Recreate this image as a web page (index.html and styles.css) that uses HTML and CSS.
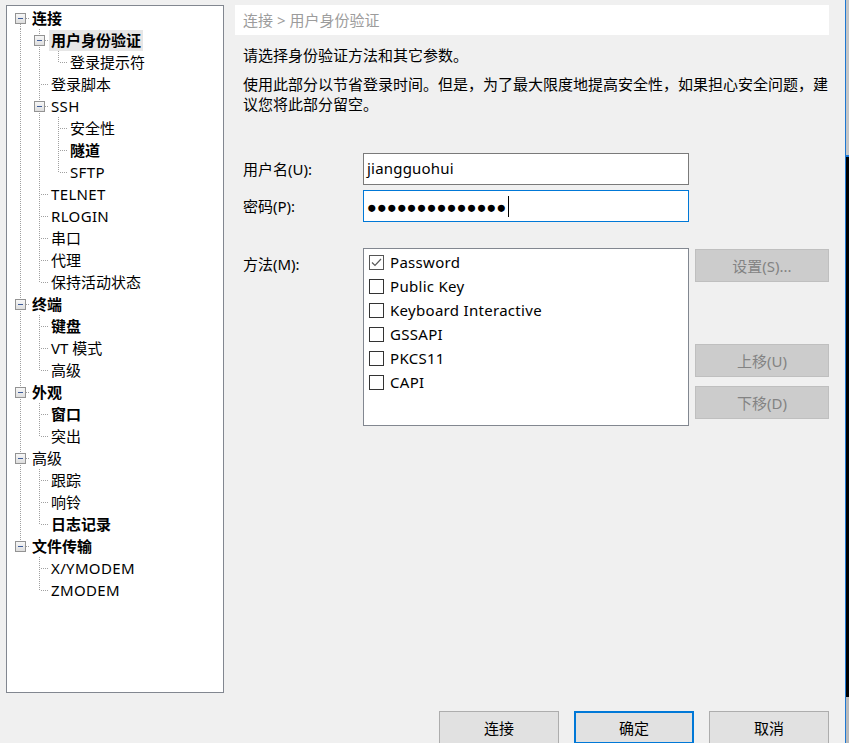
FILE: index.html
```html
<!DOCTYPE html>
<html lang="zh-CN">
<head>
<meta charset="utf-8">
<title>会话属性 - 用户身份验证</title>
<link rel="stylesheet" href="styles.css">
</head>
<body>
<div class="page">
  <div class="tree">
    <div class="row"><span class="c first"><span class="box"></span></span><span class="t b">连接</span></div>
    <div class="row"><span class="c pipe"></span><span class="c boxtee"><span class="box"></span></span><span class="t b sel">用户身份验证</span></div>
    <div class="row"><span class="c pipe"></span><span class="c pipe"></span><span class="c ell"></span><span class="t">登录提示符</span></div>
    <div class="row"><span class="c pipe"></span><span class="c tee"></span><span class="t">登录脚本</span></div>
    <div class="row"><span class="c pipe"></span><span class="c boxtee"><span class="box"></span></span><span class="t lat">SSH</span></div>
    <div class="row"><span class="c pipe"></span><span class="c pipe"></span><span class="c tee"></span><span class="t">安全性</span></div>
    <div class="row"><span class="c pipe"></span><span class="c pipe"></span><span class="c tee"></span><span class="t b">隧道</span></div>
    <div class="row"><span class="c pipe"></span><span class="c pipe"></span><span class="c ell"></span><span class="t lat">SFTP</span></div>
    <div class="row"><span class="c pipe"></span><span class="c tee"></span><span class="t lat">TELNET</span></div>
    <div class="row"><span class="c pipe"></span><span class="c tee"></span><span class="t lat">RLOGIN</span></div>
    <div class="row"><span class="c pipe"></span><span class="c tee"></span><span class="t">串口</span></div>
    <div class="row"><span class="c pipe"></span><span class="c tee"></span><span class="t">代理</span></div>
    <div class="row"><span class="c pipe"></span><span class="c ell"></span><span class="t">保持活动状态</span></div>
    <div class="row"><span class="c boxtee"><span class="box"></span></span><span class="t b">终端</span></div>
    <div class="row"><span class="c pipe"></span><span class="c tee"></span><span class="t b">键盘</span></div>
    <div class="row"><span class="c pipe"></span><span class="c tee"></span><span class="t">VT 模式</span></div>
    <div class="row"><span class="c pipe"></span><span class="c ell"></span><span class="t">高级</span></div>
    <div class="row"><span class="c boxtee"><span class="box"></span></span><span class="t b">外观</span></div>
    <div class="row"><span class="c pipe"></span><span class="c tee"></span><span class="t b">窗口</span></div>
    <div class="row"><span class="c pipe"></span><span class="c ell"></span><span class="t">突出</span></div>
    <div class="row"><span class="c boxtee"><span class="box"></span></span><span class="t">高级</span></div>
    <div class="row"><span class="c pipe"></span><span class="c tee"></span><span class="t">跟踪</span></div>
    <div class="row"><span class="c pipe"></span><span class="c tee"></span><span class="t">响铃</span></div>
    <div class="row"><span class="c pipe"></span><span class="c ell"></span><span class="t b">日志记录</span></div>
    <div class="row"><span class="c boxell"><span class="box"></span></span><span class="t b">文件传输</span></div>
    <div class="row"><span class="c blank"></span><span class="c tee"></span><span class="t lat">X/YMODEM</span></div>
    <div class="row"><span class="c blank"></span><span class="c ell"></span><span class="t lat">ZMODEM</span></div>
  </div>

  <div class="main">
    <div class="crumb">连接 &gt; 用户身份验证</div>
    <p class="desc first-desc">请选择身份验证方法和其它参数。</p>
    <p class="desc">使用此部分以节省登录时间。但是，为了最大限度地提高安全性，如果担心安全问题，建议您将此部分留空。</p>

    <div class="field user-row">
      <span class="label">用户名(U):</span>
      <div class="input"><span class="val">jiangguohui</span></div>
    </div>
    <div class="field pw-row">
      <span class="label">密码(P):</span>
      <div class="input focus"><span class="dots">●●●●●●●●●●●●●●</span><span class="caret"></span></div>
    </div>

    <div class="method-row">
      <span class="label method-label">方法(M):</span>
      <div class="list">
        <div class="item"><span class="cb checked"><svg width="13" height="13" viewBox="0 0 13 13"><polyline points="2,6.5 5,9.5 11,3" fill="none" stroke="#5a5a5a" stroke-width="1.2"/></svg></span>Password</div>
        <div class="item"><span class="cb"></span>Public Key</div>
        <div class="item"><span class="cb"></span>Keyboard Interactive</div>
        <div class="item"><span class="cb"></span>GSSAPI</div>
        <div class="item"><span class="cb"></span>PKCS11</div>
        <div class="item"><span class="cb"></span>CAPI</div>
      </div>
      <div class="side">
        <div class="btn dis">设置(S)...</div>
        <div class="btn dis up">上移(U)</div>
        <div class="btn dis down">下移(D)</div>
      </div>
    </div>

    <div class="footer">
      <div class="btn act">连接</div>
      <div class="btn act primary">确定</div>
      <div class="btn act">取消</div>
    </div>
  </div>
</div>
<div class="edge"></div>
</body>
</html>
```

FILE: styles.css
```css
html, body {
  margin: 0;
  padding: 0;
  width: 849px;
  height: 743px;
  overflow: hidden;
  background: #f0f0f0;
}
body {
  position: relative;
  font-family: "Noto Sans", "Noto Sans CJK SC", sans-serif;
  font-size: 15px;
  color: #000;
}
.page {
  display: flex;
  align-items: flex-start;
  padding: 5px 0 0 6px;
}

/* ---------- tree ---------- */
.tree {
  box-sizing: border-box;
  width: 218px;
  height: 688px;
  border: 1px solid #828790;
  background: #fff;
  padding: 1px 0 0 4px;
  margin-right: 11px;
}
.row {
  display: flex;
  height: 22px;
  line-height: 22px;
  white-space: nowrap;
}
.c {
  display: block;
  flex: none;
  width: 19px;
  height: 22px;
  box-sizing: border-box;
  padding: 6px 0 0 4px;
  background-repeat: no-repeat;
}
.pipe {
  background-image: repeating-linear-gradient(#a0a0a0 0 1px, transparent 1px 2px);
  background-size: 1px 22px;
  background-position: 9px 0;
}
.tee,
.boxtee {
  background-image:
    repeating-linear-gradient(#a0a0a0 0 1px, transparent 1px 2px),
    repeating-linear-gradient(90deg, #a0a0a0 0 1px, transparent 1px 2px);
  background-size: 1px 22px, 9px 1px;
  background-position: 9px 0, 11px 11px;
}
.ell,
.boxell {
  background-image:
    repeating-linear-gradient(#a0a0a0 0 1px, transparent 1px 2px),
    repeating-linear-gradient(90deg, #a0a0a0 0 1px, transparent 1px 2px);
  background-size: 1px 12px, 9px 1px;
  background-position: 9px 0, 11px 11px;
}
.first {
  background-image:
    repeating-linear-gradient(#a0a0a0 0 1px, transparent 1px 2px),
    repeating-linear-gradient(90deg, #a0a0a0 0 1px, transparent 1px 2px);
  background-size: 1px 11px, 9px 1px;
  background-position: 9px 11px, 11px 11px;
}
.blank { background: none; }
.box {
  display: block;
  width: 11px;
  height: 11px;
  box-sizing: border-box;
  border: 1px solid #939393;
  background:
    linear-gradient(#3f5d9a, #3f5d9a) center / 5px 1px no-repeat,
    linear-gradient(#f7f7f7, #dedede);
}
.t {
  padding: 0 2px;
}
.t.lat { letter-spacing: 0.35px; }
.t.b { font-weight: bold; }
.t.sel {
  background: #e6e6e6;
  height: 21px;
  margin-top: 1px;
  line-height: 20px;
}

/* ---------- main ---------- */
.main {
  width: 594px;
  display: flex;
  flex-direction: column;
}
.crumb {
  height: 30px;
  line-height: 30px;
  background: #fff;
  color: #9c9c9c;
  padding-left: 8px;
}
.desc {
  margin: 9px 0 0 8px;
  width: 586px;
  line-height: 20px;
}
.desc.first-desc { margin-top: 10px; }

.field {
  display: flex;
  align-items: center;
  padding-left: 8px;
}
.user-row { margin-top: 39px; }
.pw-row { margin-top: 5px; }
.label {
  width: 120px;
  flex: none;
  line-height: 20px;
}
.input {
  box-sizing: border-box;
  width: 326px;
  height: 32px;
  border: 1px solid #7a7a7a;
  background: #fff;
  padding: 0 3px;
  display: flex;
  align-items: center;
}
.input.focus { border-color: #0078d7; }
.val {
  line-height: 20px;
  margin-top: -3px;
  letter-spacing: 0.2px;
}
.dots {
  font-family: "Liberation Sans", sans-serif;
  font-size: 16.5px;
  line-height: 20px;
  margin-top: 1px;
}
.caret {
  display: block;
  width: 1px;
  height: 21px;
  background: #000;
  margin-left: 1px;
  margin-top: 1px;
}

.method-row {
  display: flex;
  align-items: flex-start;
  padding-left: 8px;
  margin-top: 26px;
}
.method-label { padding-top: 6px; }
.list {
  box-sizing: border-box;
  width: 326px;
  height: 178px;
  border: 1px solid #828790;
  background: #fff;
  padding: 1px 0 0 5px;
  margin-right: 6px;
}
.item {
  display: flex;
  align-items: center;
  height: 24px;
  line-height: 24px;
  letter-spacing: 0.3px;
}
.cb {
  box-sizing: border-box;
  width: 15px;
  height: 15px;
  border: 1px solid #333;
  background: #fff;
  margin-right: 6px;
  flex: none;
}
.cb.checked { border-color: #555; }
.cb svg { display: block; }

.side {
  display: flex;
  flex-direction: column;
  width: 134px;
  margin-top: 1px;
}
.btn {
  box-sizing: border-box;
  height: 33px;
  display: flex;
  align-items: center;
  justify-content: center;
}
.btn.dis {
  width: 134px;
  background: #cccccc;
  border: 1px solid #bfbfbf;
  color: #838383;
}
.btn.up { margin-top: 62px; }
.btn.down { margin-top: 9px; }

.footer {
  display: flex;
  justify-content: flex-end;
  gap: 15px;
  margin-top: 285px;
}
.btn.act {
  width: 120px;
  background: #e1e1e1;
  border: 1px solid #adadad;
}
.btn.primary { border: 2px solid #0078d7; }

/* background window edge visible at the right border */
.edge {
  position: absolute;
  top: 0;
  left: 845px;
  width: 4px;
  height: 743px;
  box-sizing: border-box;
  border-left: 1px solid #1e78d2;
  background: linear-gradient(#c6c6c6 0 155px, #1e78d2 155px 157px, #000 157px 697px, #bababa 697px);
}
```
